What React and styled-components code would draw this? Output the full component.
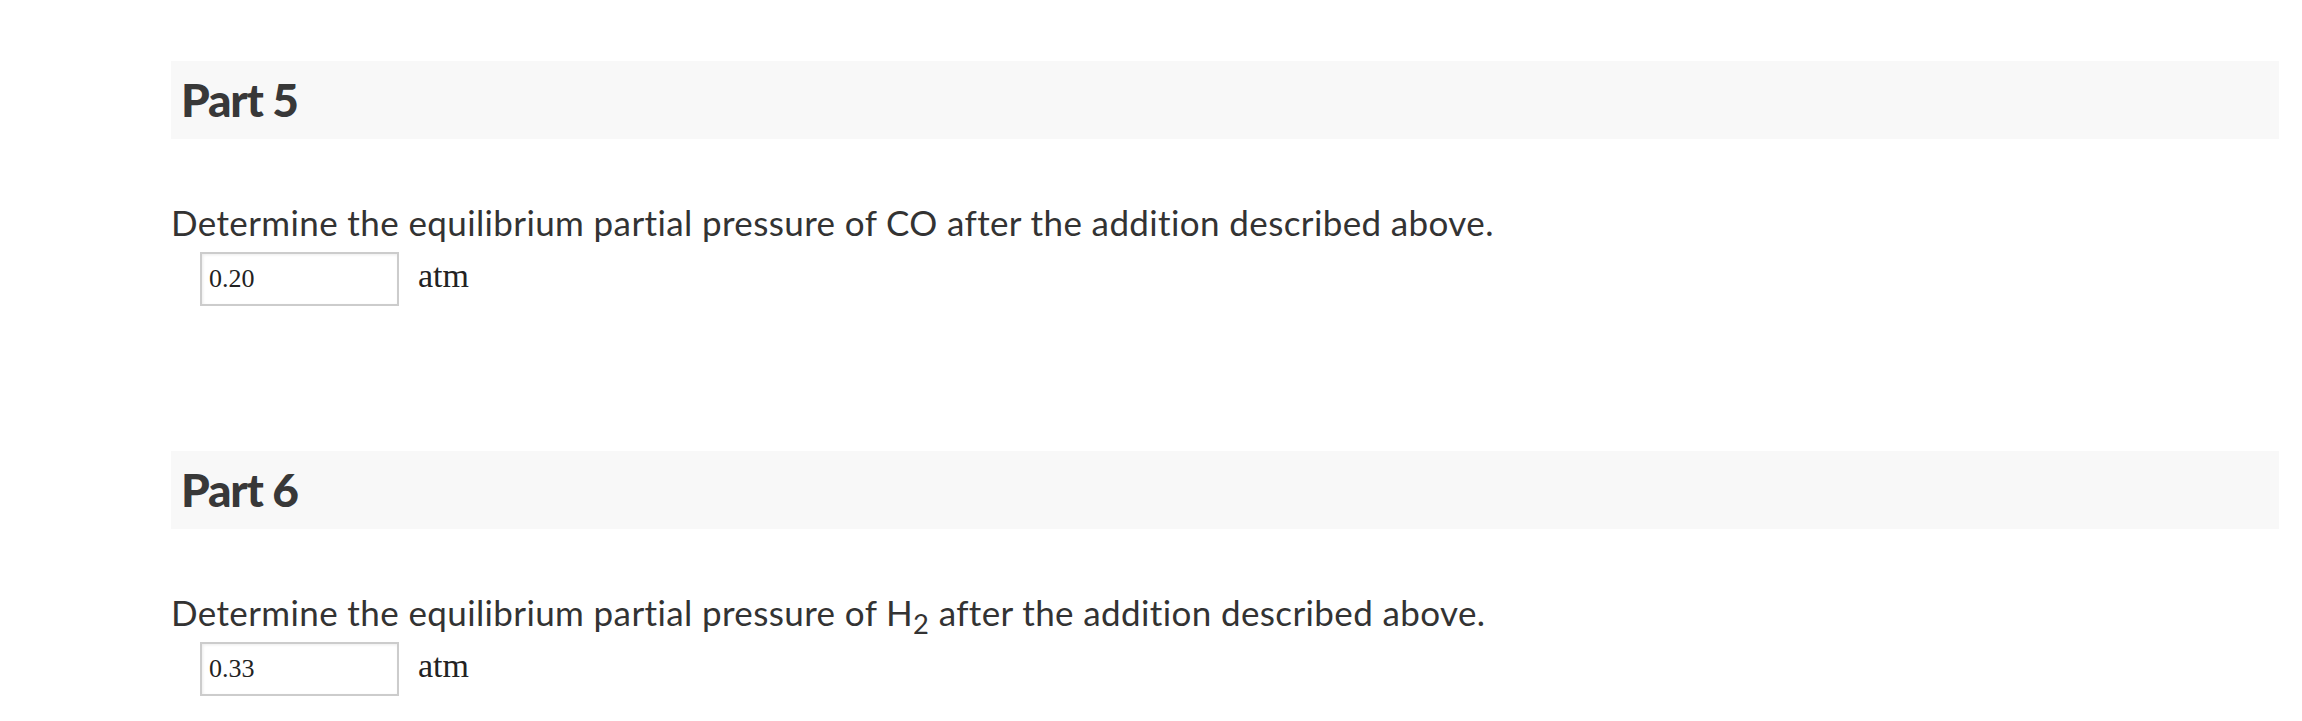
import React from "react";
import styled, { createGlobalStyle } from "styled-components";

const Global = createGlobalStyle`
  html, body { margin: 0; padding: 0; background: #ffffff; }
  body { font-family: Lato, "Open Sans", sans-serif; color: #333333; }
`;

const Page = styled.div`
  width: 2302px;
  height: 721px;
  overflow: hidden;
  box-sizing: border-box;
  padding: 61px 23px 0 171px;
  display: flex;
  flex-direction: column;
`;

const Section = styled.section`
  display: flex;
  flex-direction: column;
  margin-bottom: ${(p) => p.$after}px;
`;

const PartHeader = styled.div`
  background: #f8f8f8;
  height: 78px;
  box-sizing: border-box;
  padding: 11px 0 0 10px;
`;

const PartTitle = styled.h2`
  margin: 0;
  font-family: Lato, sans-serif;
  font-weight: 900;
  font-size: 46px;
  line-height: 55px;
  color: #383838;
  letter-spacing: -1.2px;
`;

const Question = styled.p`
  margin: 62px 0 0 0;
  font-family: Lato, sans-serif;
  font-size: 35px;
  line-height: 42px;
  letter-spacing: 0.38px;
  font-variant-ligatures: none;
  color: #333333;
`;

const Sub = styled.sub`
  font-size: 0.78em;
  line-height: 0;
  vertical-align: -0.3em;
`;

const AnswerRow = styled.div`
  display: flex;
  align-items: baseline;
  gap: 19px;
  margin: 9px 0 0 29px;
`;

const AnswerInput = styled.input`
  box-sizing: border-box;
  width: 199px;
  height: 54px;
  border: 2px solid #cccccc;
  box-shadow: inset 1px 1px 3px rgba(0, 0, 0, 0.08);
  padding: 0 0 0 7px;
  font-family: "Liberation Serif", "Times New Roman", serif;
  font-size: 26px;
  color: #222222;
  background: #ffffff;
  outline: none;
`;

const Unit = styled.span`
  font-family: "Liberation Serif", "Times New Roman", serif;
  font-size: 34px;
  color: #222222;
`;

const parts = [
  {
    n: 5,
    q: <>Determine the equilibrium partial pressure of CO after the addition described above.</>,
    v: "0.20",
    after: 145,
  },
  {
    n: 6,
    q: (
      <>
        Determine the equilibrium partial pressure of H<Sub>2</Sub> after the addition described above.
      </>
    ),
    v: "0.33",
    after: 0,
  },
];

export default function App() {
  return (
    <>
      <Global />
      <Page>
        {parts.map((p) => (
          <Section key={p.n} $after={p.after}>
            <PartHeader>
              <PartTitle>Part {p.n}</PartTitle>
            </PartHeader>
            <Question>{p.q}</Question>
            <AnswerRow>
              <AnswerInput defaultValue={p.v} readOnly />
              <Unit>atm</Unit>
            </AnswerRow>
          </Section>
        ))}
      </Page>
    </>
  );
}
